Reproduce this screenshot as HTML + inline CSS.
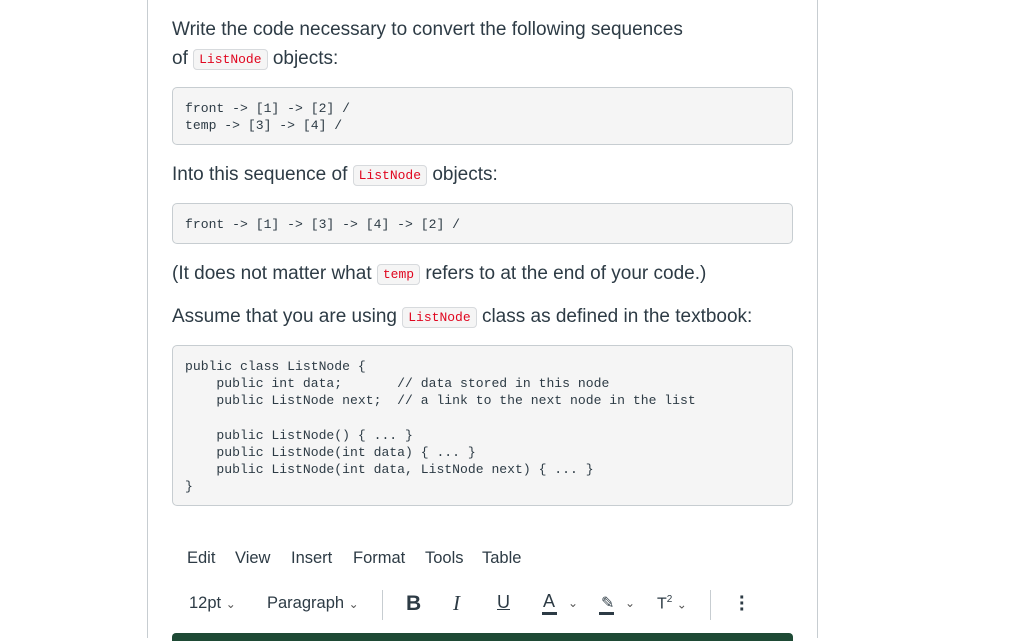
<!DOCTYPE html><html><head><style>
body{margin:0;width:1024px;height:638px;background:#fff;position:relative;overflow:hidden;font-family:"Liberation Sans",sans-serif;color:#2d3b45}
.vl{position:absolute;top:0;height:638px;width:1px;background:#c7cdd1}
.t{position:absolute;left:172px;font-size:19px;white-space:nowrap}
.ic{font-family:"Liberation Mono",monospace;font-size:13px;color:#e0061f;background:#f5f5f5;border:1px solid #d7dadd;border-radius:4px;padding:2px 5px;vertical-align:1px}
.pre{position:absolute;left:172px;width:621px;background:#f5f5f5;border:1px solid #c7cdd1;border-radius:5px;font-family:"Liberation Mono",monospace;font-size:13.1px;line-height:17.2px;white-space:pre;color:#2d3b45;box-sizing:border-box;padding:0 12px}
.m{position:absolute;top:549px;font-size:16.5px}
.tb{position:absolute;top:594px;font-size:16.5px}
.cv{font-size:12px;color:#555}
</style></head><body>
<div class="vl" style="left:147px"></div><div class="vl" style="left:817px"></div>
<div class="t" style="top:19px">Write the code necessary to convert the following sequences</div>
<div class="t" style="top:48px">of <span class="ic">ListNode</span> objects:</div>
<div class="pre" style="top:87px;height:58px;padding-top:12px">front -&gt; [1] -&gt; [2] /
temp -&gt; [3] -&gt; [4] /</div>
<div class="t" style="top:164px">Into this sequence of <span class="ic">ListNode</span> objects:</div>
<div class="pre" style="top:203px;height:41px;padding-top:12px">front -&gt; [1] -&gt; [3] -&gt; [4] -&gt; [2] /</div>
<div class="t" style="top:263px">(It does not matter what <span class="ic">temp</span> refers to at the end of your code.)</div>
<div class="t" style="top:306px">Assume that you are using <span class="ic">ListNode</span> class as defined in the textbook:</div>
<div class="pre" style="top:345px;height:161px;padding-top:12px">public class ListNode {
    public int data;       // data stored in this node
    public ListNode next;  // a link to the next node in the list

    public ListNode() { ... }
    public ListNode(int data) { ... }
    public ListNode(int data, ListNode next) { ... }
}</div>
<div class="m" style="left:187px">Edit</div><div class="m" style="left:235px">View</div><div class="m" style="left:291px">Insert</div><div class="m" style="left:353px">Format</div><div class="m" style="left:425px">Tools</div><div class="m" style="left:482px">Table</div>
<div class="tb" style="left:189px">12pt <span class="cv">&#8964;</span></div>
<div class="tb" style="left:267px">Paragraph <span class="cv">&#8964;</span></div>
<div style="position:absolute;left:382px;top:590px;width:1px;height:30px;background:#c7cdd1"></div>
<div class="tb" style="left:406px;font-size:21px;font-weight:bold;top:592px">B</div>
<div class="tb" style="left:453px;font-size:21px;font-style:italic;font-family:'Liberation Serif',serif;top:591px">I</div>
<div class="tb" style="left:497px;font-size:18px;top:592px;text-decoration:underline">U</div>
<div class="tb" style="left:543px;font-size:18px;top:591px">A</div><div style="position:absolute;left:542px;top:612px;width:15px;height:3px;background:#2d3b45"></div><div class="tb cv" style="left:568px;top:596px">&#8964;</div>
<div class="tb" style="left:601px;font-size:16px;top:593px">&#9998;</div><div style="position:absolute;left:599px;top:612px;width:15px;height:3px;background:#2d3b45"></div><div class="tb cv" style="left:625px;top:596px">&#8964;</div>
<div class="tb" style="left:657px;font-size:16px">T<sup style="font-size:10px">2</sup> <span class="cv">&#8964;</span></div>
<div style="position:absolute;left:710px;top:590px;width:1px;height:30px;background:#c7cdd1"></div>
<div class="tb" style="left:739px;font-size:20px;font-weight:bold;line-height:6px;top:595px">·<br>·<br>·</div>
<div style="position:absolute;left:172px;top:633px;width:621px;height:8px;background:#1e4a35;border-radius:4px 4px 0 0"></div>
</body></html>
